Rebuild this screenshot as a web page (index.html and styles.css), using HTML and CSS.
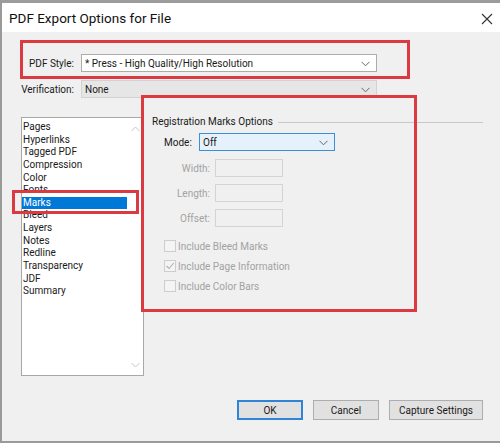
FILE: index.html
```html
<!DOCTYPE html>
<html lang="en">
<head>
  <meta charset="UTF-8">
  <title>PDF Export Options for File</title>
  <link rel="stylesheet" href="styles.css">
</head>
<body>
  <div class="window">
    <!-- Title Bar -->
    <div class="titlebar">
      <span class="title">PDF Export Options for File</span>
      <svg class="close" width="12" height="12" viewBox="0 0 12 12">
        <path d="M1 1 L11 11 M11 1 L1 11" stroke="#333" stroke-width="1.1" fill="none"/>
      </svg>
    </div>

    <div class="dialog">
      <div class="top-rows">
        <div class="row">
          <label class="row-label">PDF Style:</label>
          <div class="select">
            <span>* Press - High Quality/High Resolution</span>
            <svg class="chevron" width="9" height="6" viewBox="0 0 9 6"><path d="M0.5 0.8 L4.5 4.8 L8.5 0.8" stroke="#666" stroke-width="1" fill="none"/></svg>
          </div>
        </div>
        <div class="row">
          <label class="row-label">Verification:</label>
          <div class="select select-gray">
            <span>None</span>
            <svg class="chevron" width="9" height="6" viewBox="0 0 9 6"><path d="M0.5 0.8 L4.5 4.8 L8.5 0.8" stroke="#666" stroke-width="1" fill="none"/></svg>
          </div>
        </div>
      </div>

      <div class="main">
        <!-- Category List -->
        <div class="list">
          <ul class="items">
            <li>Pages</li>
            <li>Hyperlinks</li>
            <li>Tagged PDF</li>
            <li>Compression</li>
            <li>Color</li>
            <li>Fonts</li>
            <li class="selected">Marks</li>
            <li>Bleed</li>
            <li>Layers</li>
            <li>Notes</li>
            <li>Redline</li>
            <li>Transparency</li>
            <li>JDF</li>
            <li>Summary</li>
          </ul>
          <div class="scrollbar">
            <svg width="9" height="6" viewBox="0 0 9 6"><path d="M0.5 5 L4.5 1 L8.5 5" stroke="#c4c4c4" stroke-width="1" fill="none"/></svg>
            <svg width="9" height="6" viewBox="0 0 9 6"><path d="M0.5 1 L4.5 5 L8.5 1" stroke="#c4c4c4" stroke-width="1" fill="none"/></svg>
          </div>
        </div>

        <!-- Registration Marks Panel -->
        <div class="panel">
          <div class="group-title">
            <span>Registration Marks Options</span>
            <div class="group-line"></div>
          </div>
          <div class="mode-row">
            <label>Mode:</label>
            <div class="select select-focus">
              <span>Off</span>
              <svg class="chevron" width="9" height="6" viewBox="0 0 9 6"><path d="M0.5 0.8 L4.5 4.8 L8.5 0.8" stroke="#666" stroke-width="1" fill="none"/></svg>
            </div>
          </div>
          <div class="fields">
            <div class="field-row">
              <label>Width:</label>
              <div class="input"></div>
            </div>
            <div class="field-row">
              <label>Length:</label>
              <div class="input"></div>
            </div>
            <div class="field-row">
              <label>Offset:</label>
              <div class="input"></div>
            </div>
          </div>
          <div class="checks">
            <div class="check"><span class="box"></span>Include Bleed Marks</div>
            <div class="check">
              <span class="box">
                <svg width="10" height="10" viewBox="0 0 10 10"><path d="M1.5 5 L4 7.5 L8.8 2" stroke="#b0b0b0" stroke-width="1.1" fill="none"/></svg>
              </span>Include Page Information
            </div>
            <div class="check"><span class="box"></span>Include Color Bars</div>
          </div>
        </div>
      </div>

      <div class="buttons">
        <button class="btn btn-default">OK</button>
        <button class="btn">Cancel</button>
        <button class="btn btn-wide">Capture Settings</button>
      </div>
    </div>

    <!-- Red annotation boxes -->
    <div class="mark mark-style"></div>
    <div class="mark mark-panel"></div>
    <div class="mark mark-item"></div>
  </div>
</body>
</html>
```

FILE: styles.css
```css
* {
  margin: 0;
  padding: 0;
  box-sizing: border-box;
}
body {
  font-family: Roboto, "Noto Sans", sans-serif;
  font-size: 10px;
  color: #1a1a1a;
  background: #f0f0f0;
}
.window {
  position: relative;
  width: 500px;
  height: 443px;
  border-top: 3px solid #9c9c9c;
  border-left: 2px solid #9a9a9a;
  border-bottom: 2px solid #9a9a9a;
  background: #f0f0f0;
  overflow: hidden;
}
.titlebar {
  height: 29px;
  background: #fff;
  display: flex;
  align-items: center;
  justify-content: space-between;
  padding: 0 7px;
}
.title {
  font-size: 13.5px;
  color: #111;
  padding-top: 1px;
}
.close {
  margin-top: 2px;
}
.dialog {
  padding: 22px 17px 0 19px;
}
.top-rows {
  display: flex;
  flex-direction: column;
  gap: 8px;
}
.row {
  display: flex;
  align-items: center;
}
.row-label {
  display: flex;
  justify-content: flex-end;
  width: 53px;
  margin-right: 7px;
  white-space: nowrap;
}
.select {
  position: relative;
  flex-shrink: 0;
  width: 296px;
  height: 18px;
  background: #fff;
  border: 1px solid #acacac;
  display: flex;
  align-items: center;
  padding-left: 3px;
}
.select-gray {
  background: #e6e6e6;
  border-color: #d2d2d2;
}
.select-focus {
  width: 136px;
  background: #e5f1fb;
  border-color: #3c8fd9;
}
.chevron {
  position: absolute;
  right: 6px;
  top: 6px;
}
.main {
  display: flex;
  align-items: flex-start;
  margin-top: 16px;
}
.list {
  display: flex;
  width: 123px;
  height: 259px;
  margin-top: 3px;
  background: #fff;
  border: 1px solid #a8a8a8;
}
.items {
  list-style: none;
  flex: 1;
  padding-top: 3px;
}
.items li {
  height: 12.65px;
  line-height: 12.65px;
  padding-left: 1px;
  white-space: nowrap;
}
.items li.selected {
  background: #0078d7;
  color: #fff;
}
.scrollbar {
  width: 16px;
  display: flex;
  flex-direction: column;
  justify-content: space-between;
  align-items: center;
  padding: 8px 0 7px;
}
.panel {
  flex: 1;
  margin-left: 8px;
}
.group-title {
  display: flex;
  align-items: center;
  height: 14px;
}
.group-line {
  flex: 1;
  height: 1px;
  background: #c8c8c8;
  margin-left: 5px;
  margin-top: 3px;
}
.mode-row {
  display: flex;
  align-items: center;
  margin-top: 5px;
  padding-left: 12px;
}
.mode-row label {
  width: 30px;
  margin-right: 5px;
}
.fields {
  display: flex;
  flex-direction: column;
  gap: 7px;
  margin-top: 8px;
}
.field-row {
  display: flex;
  align-items: center;
}
.field-row label {
  width: 58px;
  text-align: right;
  margin-right: 5px;
  color: #a2a2a2;
}
.input {
  width: 68px;
  height: 18px;
  border: 1px solid #d4d4d4;
  background: #f0f0f0;
}
.checks {
  margin-top: 9px;
  padding-left: 12px;
}
.check {
  display: flex;
  align-items: center;
  height: 20px;
  color: #a2a2a2;
}
.box {
  width: 12px;
  height: 12px;
  border: 1px solid #cdcdcd;
  background: #f4f4f4;
  margin-right: 2px;
  display: flex;
  align-items: center;
  justify-content: center;
}
.buttons {
  display: flex;
  justify-content: flex-end;
  gap: 10px;
  margin-top: 24px;
}
.btn {
  font-family: inherit;
  font-size: 10px;
  width: 66px;
  height: 20px;
  background: #e1e1e1;
  border: 1px solid #adadad;
  color: #1a1a1a;
}
.btn-default {
  border: 2px solid #2f84d6;
}
.btn-wide {
  width: 94px;
}
.mark {
  position: absolute;
  border: 3px solid #dc3a42;
}
.mark-style {
  left: 18px;
  top: 37px;
  width: 390px;
  height: 39px;
}
.mark-panel {
  left: 139px;
  top: 92px;
  width: 276px;
  height: 217px;
}
.mark-item {
  left: 10px;
  top: 187px;
  width: 127px;
  height: 24px;
}
```
